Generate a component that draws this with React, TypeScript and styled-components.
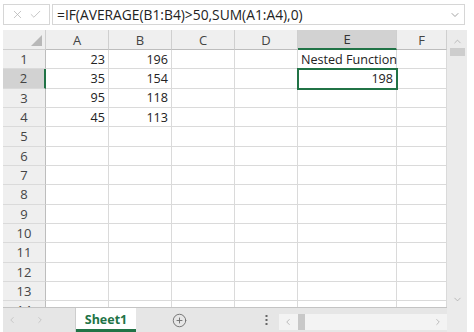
import React from "react"
import styled, {createGlobalStyle} from "styled-components"
import {X, Check, ChevronDown, ChevronUp, ChevronLeft, ChevronRight, CirclePlus} from "lucide-react"

const GREEN = "#217346"
const LINE = "#dadada"

const columns = ["A", "B", "C", "D", "E", "F"]
const rowCount = 14

// cell values keyed by address
const values: Record<string, {text: string, right?: boolean}> = {
    A1: {text: "23", right: true},
    B1: {text: "196", right: true},
    A2: {text: "35", right: true},
    B2: {text: "154", right: true},
    A3: {text: "95", right: true},
    B3: {text: "118", right: true},
    A4: {text: "45", right: true},
    B4: {text: "113", right: true},
    E1: {text: "Nested Function"},
    E2: {text: "198", right: true},
}

const activeCol = "E"
const activeRow = 2

const App = () => {
    return <Window>
        <GlobalStyle/>
        <FormulaBar>
            <EditButtons>
                <X size={13} strokeWidth={1.4}/>
                <Check size={13} strokeWidth={1.4}/>
            </EditButtons>
            <FormulaInput>
                <span>=IF(AVERAGE(B1:B4)&gt;50,SUM(A1:A4),0)</span>
                <ChevronDown size={12} strokeWidth={1.6}/>
            </FormulaInput>
        </FormulaBar>

        <Main>
            <Grid>
                <Corner>
                    <svg width="11" height="11" viewBox="0 0 11 11">
                        <polygon points="11,0 11,11 0,11" fill="#b8b8b8"/>
                    </svg>
                </Corner>
                {columns.map(c => <ColHead key={c} $active={c === activeCol}>{c}</ColHead>)}
                {Array.from({length: rowCount}, (_, i) => i + 1).map(r => <React.Fragment key={r}>
                    <RowHead $active={r === activeRow}>{r}</RowHead>
                    {columns.map(c => {
                        const v = values[c + r]
                        const active = c === activeCol && r === activeRow
                        return <Cell key={c} $right={v?.right} $active={active}>{v?.text}</Cell>
                    })}
                </React.Fragment>)}
            </Grid>
            <VScroll>
                <ChevronUp size={11} strokeWidth={1.6}/>
                <VThumb/>
                <Spacer/>
                <ChevronDown size={11} strokeWidth={1.6}/>
            </VScroll>
        </Main>

        <BottomBar>
            <SheetNav>
                <ChevronLeft size={10} strokeWidth={2}/>
                <ChevronRight size={10} strokeWidth={2}/>
            </SheetNav>
            <SheetTab>Sheet1</SheetTab>
            <AddSheet>
                <CirclePlus size={15} strokeWidth={1.5}/>
            </AddSheet>
            <Spacer/>
            <Dots>
                <svg width="3" height="10" viewBox="0 0 3 10">
                    <rect x="0.5" y="0" width="2" height="2" fill="#666"/>
                    <rect x="0.5" y="4" width="2" height="2" fill="#666"/>
                    <rect x="0.5" y="8" width="2" height="2" fill="#666"/>
                </svg>
            </Dots>
            <HScroll>
                <ChevronLeft size={10} strokeWidth={1.8}/>
                <HThumb/>
                <Spacer/>
                <ChevronRight size={10} strokeWidth={1.8}/>
            </HScroll>
            <ScrollCorner/>
        </BottomBar>
    </Window>
}

const GlobalStyle = createGlobalStyle`
    html, body {
        margin: 0;
        padding: 0;
        background: #fff;
    }

    body {
        font-family: "Open Sans", "Noto Sans", sans-serif;
    }
`

const Window = styled.div`
    width: 474px;
    height: 332px;
    box-sizing: border-box;
    padding: 0 7px 0 3px;
    display: flex;
    flex-direction: column;
    overflow: hidden;
    background: #fff;
`

const FormulaBar = styled.div`
    display: flex;
    gap: 2px;
    height: 30px;
    box-sizing: border-box;
    padding: 4px 2px 5px 0;
`

const EditButtons = styled.div`
    width: 47px;
    box-sizing: border-box;
    border: 1px solid #d6d6d6;
    display: flex;
    align-items: center;
    justify-content: space-around;
    padding: 0 4px;
    color: #b4b4b4;
`

const FormulaInput = styled.div`
    flex: 1;
    border: 1px solid #d6d6d6;
    display: flex;
    align-items: center;
    justify-content: space-between;
    padding: 0 3px 0 4px;
    font-size: 13.8px;
    color: #222;
    white-space: nowrap;

    & svg {
        color: #8a8a8a;
    }
`

const Main = styled.div`
    display: flex;
    height: 278px;
`

const Grid = styled.div`
    width: 444px;
    display: grid;
    grid-template-columns: 43px 63px 63px 63px 63px 99px 50px;
    grid-template-rows: 20px repeat(14, 19.33px);
    overflow: hidden;
    border-bottom: 1px solid #c4c4c4;
    box-sizing: border-box;
    font-size: 12.6px;
`

const Head = styled.div`
    background: #efefef;
    border-right: 1px solid #cfcfcf;
    border-bottom: 1px solid #cfcfcf;
    box-sizing: border-box;
    display: flex;
    align-items: center;
    justify-content: center;
    font-size: 13px;
    color: #444;
`

const Corner = styled(Head)`
    align-items: flex-end;
    justify-content: flex-end;
    padding: 0 3px 3px 0;
`

const ColHead = styled(Head)<{$active: boolean}>`
    background: ${p => p.$active ? "#d2d2d2" : "#efefef"};
    border-bottom: ${p => p.$active ? `2px solid ${GREEN}` : "1px solid #bdbdbd"};
    color: ${p => p.$active ? "#333" : "#444"};
`

const RowHead = styled(Head)<{$active: boolean}>`
    background: ${p => p.$active ? "#d2d2d2" : "#efefef"};
    border-right: ${p => p.$active ? `2px solid ${GREEN}` : "1px solid #bdbdbd"};
    border-bottom: 1px solid #dadada;
`

const Cell = styled.div<{$right?: boolean, $active?: boolean}>`
    border-right: 1px solid ${LINE};
    border-bottom: 1px solid ${LINE};
    box-sizing: border-box;
    display: flex;
    align-items: center;
    justify-content: ${p => p.$right ? "flex-end" : "flex-start"};
    padding: 0 3px;
    color: #222;
    white-space: nowrap;
    position: relative;
    ${p => p.$active && `
        outline: 2px solid ${GREEN};
        outline-offset: -1px;
        z-index: 1;
    `}
`

const VScroll = styled.div`
    width: 20px;
    background: #ebebeb;
    display: flex;
    flex-direction: column;
    align-items: center;
    padding: 6px 0 3px;
    box-sizing: border-box;
    color: #a8a8a8;
`

const VThumb = styled.div`
    width: 15px;
    height: 8px;
    margin-top: 1px;
    background: #cdcdcd;
`

const Spacer = styled.div`
    flex: 1;
`

const BottomBar = styled.div`
    flex: 1;
    display: flex;
    background: #e6e6e6;
`

const SheetNav = styled.div`
    width: 73px;
    box-sizing: border-box;
    border-right: 1px solid #cdcdcd;
    display: flex;
    align-items: center;
    gap: 18px;
    padding-left: 4px;
    color: #c0c0c0;
`

const SheetTab = styled.div`
    width: 60px;
    box-sizing: border-box;
    background: #fff;
    border-bottom: 3px solid ${GREEN};
    display: flex;
    align-items: center;
    justify-content: center;
    padding-top: 2px;
    font-size: 12.5px;
    font-weight: 700;
    color: ${GREEN};
`

const AddSheet = styled.div`
    width: 86px;
    display: flex;
    align-items: center;
    justify-content: center;
    color: #707070;
`

const Dots = styled.div`
    width: 14px;
    margin-right: 6px;
    display: flex;
    align-items: center;
    justify-content: center;
`

const HScroll = styled.div`
    width: 168px;
    height: 16px;
    margin-top: 6px;
    background: #f3f3f3;
    display: flex;
    align-items: center;
    padding: 0 4px;
    box-sizing: border-box;
    color: #a8a8a8;
`

const HThumb = styled.div`
    width: 7px;
    height: 16px;
    margin-left: 5px;
    background: #c8c8c8;
`

const ScrollCorner = styled.div`
    width: 20px;
    background: #ebebeb;
`

export default App
